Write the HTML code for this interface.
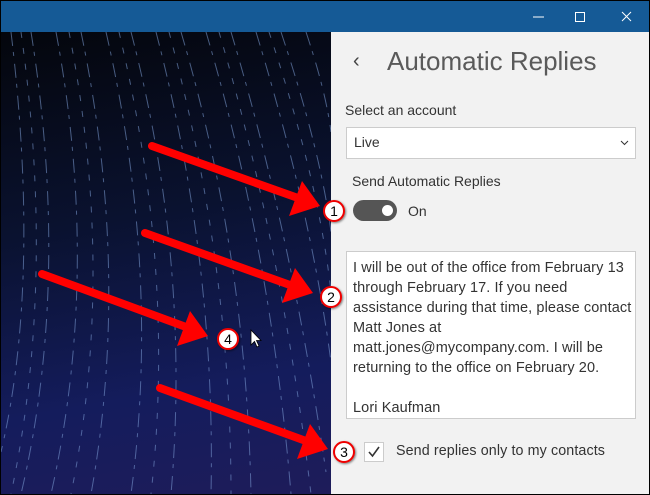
<!DOCTYPE html>
<html><head><meta charset="utf-8"><style>
*{margin:0;padding:0;box-sizing:border-box}
body{width:650px;height:495px;overflow:hidden;background:#000;font-family:"Liberation Sans",sans-serif;position:relative}
.title{position:absolute;left:1px;top:1px;width:648px;height:31px;background:#155a96}
.bg{position:absolute;left:1px;top:32px;width:330px;height:462px;background:linear-gradient(170deg,#04060c 0%,#0a1230 40%,#141c5c 75%,#1e1c5a 100%)}
.panel{position:absolute;left:331px;top:32px;width:318px;height:462px;background:#f2f2f2}
.t{position:absolute;color:#333;white-space:nowrap}
.box{position:absolute;background:#fff;border:1px solid #ccc}
</style></head><body>
<div class="title">
<svg width="648" height="31" style="position:absolute;left:0;top:0">
<line x1="532" y1="16" x2="543" y2="16" stroke="#fff" stroke-width="1"/>
<rect x="574.5" y="11.5" width="9" height="9" fill="none" stroke="#fff"/>
<path d="M621 11 L630 20 M630 11 L621 20" stroke="#fff"/>
</svg></div>
<div class="bg"><svg width="330" height="462" style="position:absolute;left:0;top:0" opacity="0.55">
<g stroke="#7fa0d8" stroke-width="1" stroke-dasharray="14 6 4 8">
<path d="M10 0 Q 40 250 0 420" fill="none"/>
<path d="M30 0 Q 70 250 20 462" fill="none"/>
<path d="M55 0 Q 100 240 50 462" fill="none"/>
<path d="M80 0 Q 130 240 90 462" fill="none"/>
<path d="M105 0 Q 160 240 130 462" fill="none"/>
<path d="M130 0 Q 190 230 170 462" fill="none"/>
<path d="M155 0 Q 215 230 210 462" fill="none"/>
<path d="M180 0 Q 245 220 250 462" fill="none"/>
<path d="M205 0 Q 270 220 290 462" fill="none"/>
<path d="M230 0 Q 290 200 325 440" fill="none"/>
<path d="M255 0 Q 310 180 330 330" fill="none"/>
<path d="M280 0 Q 320 120 330 200" fill="none"/>
<path d="M305 0 Q 325 60 330 100" fill="none"/>
<path d="M20 0 Q 55 250 10 462" fill="none" stroke-dasharray="6 10"/>
<path d="M68 0 Q 115 240 70 462" fill="none" stroke-dasharray="6 10"/>
<path d="M118 0 Q 175 240 150 462" fill="none" stroke-dasharray="6 10"/>
<path d="M168 0 Q 230 230 230 462" fill="none" stroke-dasharray="6 10"/>
<path d="M218 0 Q 280 210 310 462" fill="none" stroke-dasharray="6 10"/>
<path d="M268 0 Q 318 150 330 260" fill="none" stroke-dasharray="6 10"/>
</g></svg></div>
<div class="panel"></div>
<div class="t" style="left:353px;top:50px;font-size:20px;color:#444">‹</div>
<div class="t" style="left:387px;top:46px;font-size:26px;color:#5a5a5a">Automatic Replies</div>
<div class="t" style="left:345px;top:102px;font-size:14px">Select an account</div>
<div class="box" style="left:346px;top:127px;width:290px;height:32px"></div>
<div class="t" style="left:354px;top:134px;font-size:14px">Live</div>
<svg style="position:absolute;left:620px;top:139px" width="10" height="8"><path d="M1 2 L4.5 5.5 L8 2" stroke="#333" fill="none"/></svg>
<div class="t" style="left:352px;top:173px;font-size:14px">Send Automatic Replies</div>
<div style="position:absolute;left:353px;top:200px;width:44px;height:21px;border-radius:11px;background:#555"></div>
<div style="position:absolute;left:382px;top:205px;width:11px;height:11px;border-radius:50%;background:#fff"></div>
<div class="t" style="left:408px;top:203px;font-size:14px">On</div>
<div class="box" style="left:346px;top:251px;width:290px;height:168px"></div>
<div class="t" style="left:353px;top:258px;font-size:14.5px;line-height:20px;white-space:pre;letter-spacing:0.1px">I will be out of the office from February 13
through February 17. If you need
assistance during that time, please contact
Matt Jones at
matt.jones@mycompany.com. I will be
returning to the office on February 20.

Lori Kaufman</div>
<div style="position:absolute;left:364px;top:442px;width:20px;height:20px;border:1px solid #ccc;background:#fff"></div>
<svg style="position:absolute;left:364px;top:442px" width="20" height="20"><path d="M5 10 L8.5 14 L15 5" stroke="#333" stroke-width="1.6" fill="none"/></svg>
<div class="t" style="left:396px;top:443px;font-size:14.3px;letter-spacing:0.1px">Send replies only to my contacts</div>
<svg width="650" height="495" style="position:absolute;left:0;top:0">
<defs><filter id="s"><feDropShadow dx="1" dy="1" stdDeviation="1" flood-opacity="0.5"/></filter></defs>
<g stroke="#f00" stroke-width="8" stroke-linecap="round" fill="#f00">
<line x1="152" y1="146" x2="298" y2="198"/>
<line x1="145" y1="233" x2="290" y2="285"/>
<line x1="42" y1="274" x2="186" y2="327"/>
<line x1="160" y1="388" x2="306" y2="441"/>
</g>
<g fill="#f00">
<polygon points="320,206 289,216 302,181"/>
<polygon points="313,293 282,303 295,268"/>
<polygon points="208,336 177,346 190,311"/>
<polygon points="328,449 297,459 310,424"/>
</g>
<g fill="#fff" stroke="#e00" stroke-width="2" filter="url(#s)">
<circle cx="334" cy="211" r="10"/><circle cx="331" cy="297" r="10"/>
<circle cx="228" cy="339" r="10"/><circle cx="344" cy="452" r="10"/>
</g>
<g font-family="Liberation Sans" font-size="14" fill="#000" text-anchor="middle">
<text x="334" y="216">1</text><text x="331" y="302">2</text>
<text x="228" y="344">4</text><text x="344" y="457">3</text>
</g>
<path d="M251 330 L251 345 L254.5 341.5 L257 347 L259 346 L256.5 340.5 L261 340.5 Z" fill="#fff" stroke="#000" stroke-width="0.8"/>
</svg>
</body></html>
